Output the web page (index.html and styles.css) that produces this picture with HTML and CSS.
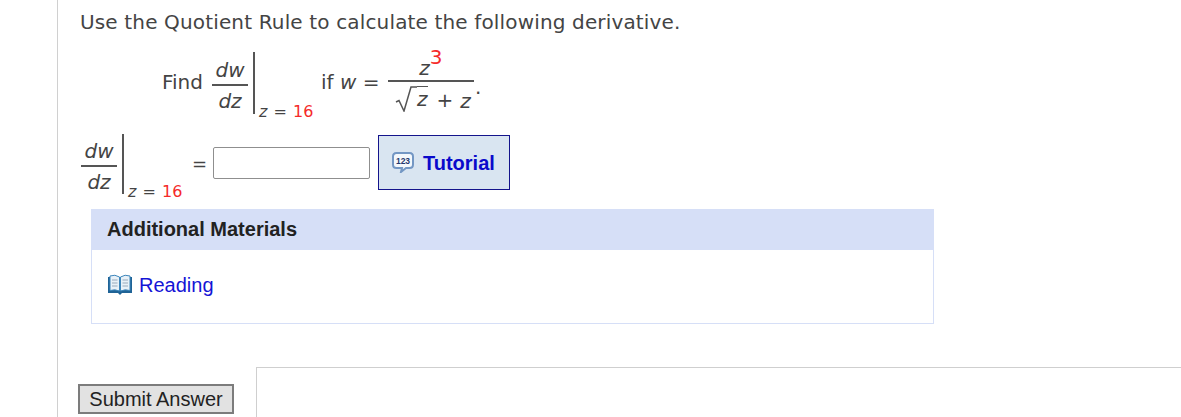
FILE: index.html
```html
<!DOCTYPE html>
<html lang="en">
<head>
<meta charset="utf-8">
<title>Quotient Rule</title>
<link rel="stylesheet" href="styles.css">
</head>
<body>
<main class="page">
  <p class="prompt">Use the Quotient Rule to calculate the following derivative.</p>

  <div class="find-row">
    <span class="find-word">Find</span>
    <span class="frac deriv"><span class="num"><i>dw</i></span><span class="den"><i>dz</i></span></span>
    <span class="evalbar"></span>
    <span class="sub"><i>z</i> = <b class="red">16</b></span>
    <span class="ifw">if <i>w</i> =</span>
    <span class="frac big">
      <span class="num"><i>z</i><sup class="red">3</sup></span>
      <span class="den"><svg class="radical" width="22" height="26" viewBox="0 0 22 26"><path d="M1 16 L4 14.5 L9 25 L16 1 L22 1" fill="none" stroke="#555" stroke-width="1.5"/></svg><i class="radicand">z</i><span class="plus">+</span><i>z</i></span>
    </span>
    <span class="dot">.</span>
  </div>

  <div class="answer-row">
    <span class="frac deriv"><span class="num"><i>dw</i></span><span class="den"><i>dz</i></span></span>
    <span class="evalbar"></span>
    <span class="sub"><i>z</i> = <b class="red">16</b></span>
    <span class="eq">=</span>
    <input class="answer" type="text" aria-label="answer">
    <a class="tutorial" href="#">
      <svg width="22" height="22" viewBox="0 0 22 22"><path d="M4.5 2 H17.5 Q21 2 21 5.5 V13.5 Q21 17 17.5 17 H14 L9 21 L10 17 H4.5 Q1 17 1 13.5 V5.5 Q1 2 4.5 2 Z" fill="#f4f8fc" stroke="#7397c4" stroke-width="2"/><text x="11" y="12.8" class="icon-num" text-anchor="middle">123</text></svg>
      <span>Tutorial</span>
    </a>
  </div>

  <section class="materials">
    <h2 class="materials-head">Additional Materials</h2>
    <div class="materials-body">
      <a class="reading" href="#">
        <svg width="26" height="23" viewBox="0 0 26 23"><path d="M1 3 H25 V19 H15 L13 21 L11 19 H1 Z" fill="#1f6396"/><path d="M3 2 Q8 0 12.5 3 V17 Q8 15 3 16.5 Z M23 2 Q18 0 13.5 3 V17 Q18 15 23 16.5 Z" fill="#e8f1f8" stroke="#3d86bb"/><path d="M5 6 H10.5 M5 9 H10.5 M5 12 H10.5 M15.5 6 H21 M15.5 9 H21 M15.5 12 H21" stroke="#9ab" stroke-width="1"/></svg>
        <span>Reading</span>
      </a>
    </div>
  </section>

  <div class="footer-row">
    <button class="submit" type="button">Submit Answer</button>
    <div class="notes"></div>
  </div>
</main>
</body>
</html>
```
FILE: styles.css
```css
html, body {
  margin: 0;
  padding: 0;
  height: 100%;
  overflow: hidden;
  background: #fff;
}
.page {
  box-sizing: border-box;
  height: 417px;
  margin-left: 57px;
  border-left: 1px solid #d0d0d0;
  padding-left: 20px;
  font-family: "DejaVu Sans", sans-serif;
  color: #444;
  overflow: hidden;
}
.prompt {
  margin: 0;
  padding: 10px 0 0 2px;
  font-size: 20px;
  line-height: 24px;
  letter-spacing: 0.15px;
}
.red { color: #f52a2a; font-weight: normal; }
i { font-style: oblique; }

.find-row, .answer-row {
  display: flex;
  align-items: center;
  font-size: 20px;
}
.find-row {
  margin-top: 18px;
  height: 62px;
  padding-left: 84px;
}
.find-word { margin: 0 9px 2px 0; }
.frac {
  display: inline-flex;
  flex-direction: column;
  align-items: center;
}
.frac .num, .frac .den { display: block; text-align: center; }
.deriv { width: 36px; }
.deriv .num { width: 100%; border-bottom: 2px solid #555; line-height: 36px; height: 32px; }
.deriv .den { line-height: 30px; height: 28px; }
.evalbar {
  align-self: stretch;
  width: 2px;
  margin-left: 5px;
  background: #555;
}
.sub {
  align-self: flex-end;
  margin: 0 0 -7px 4px;
  font-size: 16px;
  line-height: 18px;
  white-space: pre;
  width: 62px;
  word-spacing: 1px;
}
.ifw { margin: 0 0 2px; width: 67px; white-space: nowrap; }
.big { width: 86px; }
.big .num {
  width: 100%;
  border-bottom: 2px solid #555;
  height: 28px;
  line-height: 32px;
}
.big sup {
  font-size: 20px;
  line-height: 0;
  vertical-align: 11px;
}
.big .den {
  display: flex;
  align-items: flex-end;
  justify-content: center;
  box-sizing: border-box;
  height: 32px;
  padding-left: 4px;
  line-height: 26px;
  font-size: 20px;
}
.radical { flex: none; margin-bottom: 2px; }
.radicand { border-top: 1.5px solid #555; line-height: 25px; height: 25px; margin-right: 9px; margin-bottom: 2px; }
.plus { margin-right: 7px; line-height: 28px; }
.dot { align-self: center; margin: 8px 0 0 1px; }

.answer-row {
  height: 60px;
  margin-top: 20px;
  padding-left: 3px;
}
.answer-row .sub { width: 64px; }
.eq { width: 21px; font-size: 18px; margin-bottom: 2px; }
.answer {
  box-sizing: border-box;
  flex: none;
  width: 157px;
  height: 32px;
  padding: 0;
  margin: 0 0 3px;
  background: #fff;
  border: 1px solid #8f8f8f;
  border-radius: 2px;
}
.tutorial {
  box-sizing: border-box;
  display: flex;
  align-items: center;
  gap: 9px;
  width: 132px;
  height: 55px;
  margin: 0 0 4px 8px;
  padding: 0 0 0 13px;
  background: #d9e5f1;
  border: 1px solid #14148c;
  color: #0a0acb;
  font: bold 20px "Liberation Sans", sans-serif;
  text-decoration: none;
}
.tutorial span { padding-top: 2px; }
.icon-num {
  font: bold 8.5px "Liberation Sans", sans-serif;
  fill: #24386e;
}

.materials {
  box-sizing: border-box;
  width: 843px;
  margin: 15px 0 0 13px;
  border: 1px solid #d6dff7;
  border-top: 0;
  font-family: "Liberation Sans", sans-serif;
}
.materials-head {
  margin: 0 -1px;
  height: 41px;
  padding-left: 16px;
  background: #d6dff7;
  color: #222;
  font-size: 20px;
  font-weight: bold;
  line-height: 41px;
}
.materials-body {
  height: 73px;
  box-sizing: border-box;
  padding: 21px 0 0 15px;
}
.reading {
  display: flex;
  align-items: center;
  gap: 6px;
  color: #1414d6;
  font-size: 20px;
  line-height: 29px;
  text-decoration: none;
}

.footer-row {
  display: flex;
  align-items: flex-start;
  gap: 22px;
  margin-top: 43px;
}
.submit {
  box-sizing: border-box;
  flex: none;
  width: 156px;
  height: 30px;
  margin-top: 17px;
  padding: 0;
  background: #e2e2e2;
  border: 2px solid #7c7c7c;
  color: #222;
  font: 20px "Liberation Sans", sans-serif;
}
.notes {
  flex: 1;
  height: 80px;
  border: 1px solid #cfcfcf;
  border-right: 0;
}
```
